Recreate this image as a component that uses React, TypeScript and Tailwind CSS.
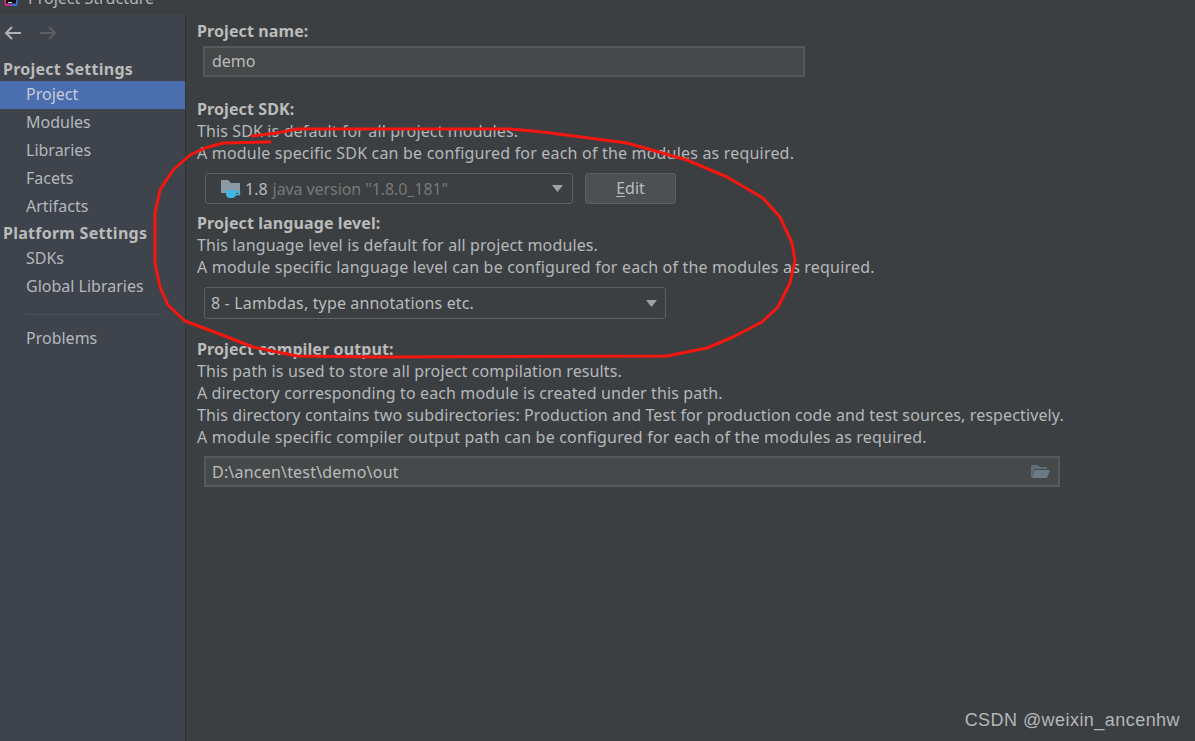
import React from 'react';

const Caret = () => (
  <svg width="11" height="7" viewBox="0 0 11 7" className="shrink-0">
    <path d="M0 0h11L5.5 7z" fill="#a0a2a4" />
  </svg>
);

const sdkIcon = (
  <svg width="20" height="18" viewBox="0 0 20 18" className="shrink-0">
    <path d="M0 0h7l3 3h9v10H0z" fill="#8b9aa5" />
    <path d="M5 10h10v4a4 4 0 0 1-4 4H9a4 4 0 0 1-4-4z" fill="#40b6e0" />
    <path d="M15 11.5h3.5v3H14" fill="none" stroke="#40b6e0" strokeWidth="1.3" />
  </svg>
);

const NavItem = ({ label, active }: { label: string; active?: boolean }) => (
  <div className={`h-7 pl-[26px] leading-[26px] ${active ? 'bg-[#4b6eaf] text-[#c6cdd6]' : 'text-[#b4b8bd]'}`}>
    {label}
  </div>
);

const Heading = ({ children }: { children: React.ReactNode }) => (
  <div className="h-[22px] leading-[22px] font-bold tracking-[0.1px] text-[#bbbbbb]">{children}</div>
);

const Line = ({ children, wide }: { children: React.ReactNode; wide?: boolean }) => (
  <div className={`h-[22px] leading-[22px] whitespace-nowrap text-[#b4b8bb] ${wide ? 'tracking-[0.19px]' : 'tracking-[0.12px]'}`}>
    {children}
  </div>
);

export default function App() {
  return (
    <div className="relative w-[1195px] h-[741px] overflow-hidden bg-[#3c3f41] font-['Noto_Sans',sans-serif] text-[16px]">
      {/* title bar, cut off by the screenshot */}
      <div className="h-[15px] overflow-hidden flex items-start pl-[4px] gap-[10px]">
        <svg width="14" height="6" viewBox="0 0 14 6" className="shrink-0">
          <path d="M0 0h7v6H1z" fill="#c2327f" />
          <path d="M7 0h7l-1 6H7z" fill="#3f6fd8" />
          <rect x="2" y="0" width="10" height="3.5" fill="#111" />
          <rect x="4" y="2" width="4" height="1" fill="#ddd" />
        </svg>
        <div className="leading-[22px] -mt-[13px] text-[#b4b6b8] text-[16px]">Project Structure</div>
      </div>

      <div className="flex h-[726px]">
        {/* sidebar */}
        <div className="w-[186px] shrink-0 bg-[#3e434c] border-r border-[#323232]">
          <div className="flex items-center h-9 pl-1 gap-[17px] mt-0">
            <svg width="18" height="14" viewBox="0 0 18 14">
              <path d="M17 7H2M8 1L2 7l6 6" fill="none" stroke="#b0b2b4" strokeWidth="2" />
            </svg>
            <svg width="18" height="14" viewBox="0 0 18 14">
              <path d="M1 7h15M10 1l6 6-6 6" fill="none" stroke="#5c6066" strokeWidth="2" />
            </svg>
          </div>
          <div className="mt-[6px] pl-[3px] h-[24px] leading-[24px] font-bold tracking-[0.25px] text-[#bbbbbb]">Project Settings</div>
          <NavItem label="Project" active />
          <NavItem label="Modules" />
          <NavItem label="Libraries" />
          <NavItem label="Facets" />
          <NavItem label="Artifacts" />
          <div className="pl-[3px] h-[24px] leading-[24px] font-bold tracking-[0.25px] text-[#bbbbbb]">Platform Settings</div>
          <NavItem label="SDKs" />
          <NavItem label="Global Libraries" />
          <div className="mt-[13px] ml-[26px] mr-[24px] h-px bg-[#4c5058]" />
          <div className="mt-[10px]">
            <NavItem label="Problems" />
          </div>
        </div>

        {/* project settings form */}
        <div className="flex-1 pl-[11px] pt-[5px]">
          <Heading>Project name:</Heading>
          <div className="mt-[4px] ml-[6px] w-[602px] h-[31px] border-2 border-[#56595b] bg-[#45494a] pl-[7px] leading-[26px] text-[#bbbbbb]">
            demo
          </div>

          <div className="mt-[21px]">
            <Heading>Project SDK:</Heading>
          </div>
          <Line>This SDK is default for all project modules.</Line>
          <Line wide>A module specific SDK can be configured for each of the modules as required.</Line>

          <div className="mt-[9px] ml-[8px] flex gap-[12px]">
            <div className="w-[368px] h-[31px] rounded-[3px] border border-[#5e6060] flex items-center pl-[15px] pr-[9px]">
              {sdkIcon}
              <span className="ml-[4px] text-[#bbbbbb]">1.8</span>
              <span className="ml-[5px] flex-1 tracking-[-0.08px] text-[#787878]">java version "1.8.0_181"</span>
              <Caret />
            </div>
            <div className="w-[91px] h-[31px] rounded-[3px] border border-[#5e6060] bg-[#4c5052] text-center leading-[28px] text-[#bbbbbb]">
              <span className="underline underline-offset-2">E</span>dit
            </div>
          </div>

          <div className="mt-[8px]">
            <Heading>Project language level:</Heading>
          </div>
          <Line>This language level is default for all project modules.</Line>
          <Line wide>A module specific language level can be configured for each of the modules as required.</Line>

          <div className="mt-[9px] ml-[7px] w-[462px] h-[32px] rounded-[3px] border border-[#5e6060] flex items-center justify-between pl-[6px] pr-[8px] tracking-[0.15px] text-[#bbbbbb]">
            <span>8 - Lambdas, type annotations etc.</span>
            <Caret />
          </div>

          <div className="mt-[19px]">
            <Heading>Project compiler output:</Heading>
          </div>
          <Line>This path is used to store all project compilation results.</Line>
          <Line>A directory corresponding to each module is created under this path.</Line>
          <Line>This directory contains two subdirectories: Production and Test for production code and test sources, respectively.</Line>
          <Line wide>A module specific compiler output path can be configured for each of the modules as required.</Line>

          <div className="mt-[8px] ml-[7px] w-[856px] h-[31px] border-2 border-[#56595b] bg-[#45494a] flex items-center justify-between pl-[6px] pr-[7px] tracking-[0.2px] text-[#bbbbbb]">
            <span>D:\ancen\test\demo\out</span>
            <svg width="20" height="15" viewBox="0 0 20 15">
              <path d="M0 1h7l2 2h7v2H4L1 13H0z" fill="#5f6f79" />
              <path d="M4 6h15l-3 8H1z" fill="#6b7b85" />
            </svg>
          </div>
        </div>
      </div>

      {/* red hand drawn annotation on top of the form */}
      <svg className="absolute inset-0 pointer-events-none" width="1195" height="741" viewBox="0 0 1195 741">
        <path
          d="M252 136L277 133L297 129L510 129L543 132L627 143L687 160L727 177L763 198L780 217L792 243L795 260L790 283L778 307L762 322L733 337L707 348L667 356L380 357L297 356L253 347L217 333L185 321L168 305L160 287L155 263L155 213L160 190L173 170L190 155L205 148L223 143L270 142"
          fill="none"
          stroke="#f5170f"
          strokeWidth="3"
          strokeLinejoin="round"
          strokeLinecap="round"
        />
      </svg>

      <div className="absolute right-[15px] bottom-[9px] font-['Liberation_Sans',sans-serif] text-[18px] tracking-[0.45px] leading-[24px] text-[#b4b6b8]">
        CSDN @weixin_ancenhw
      </div>
    </div>
  );
}
